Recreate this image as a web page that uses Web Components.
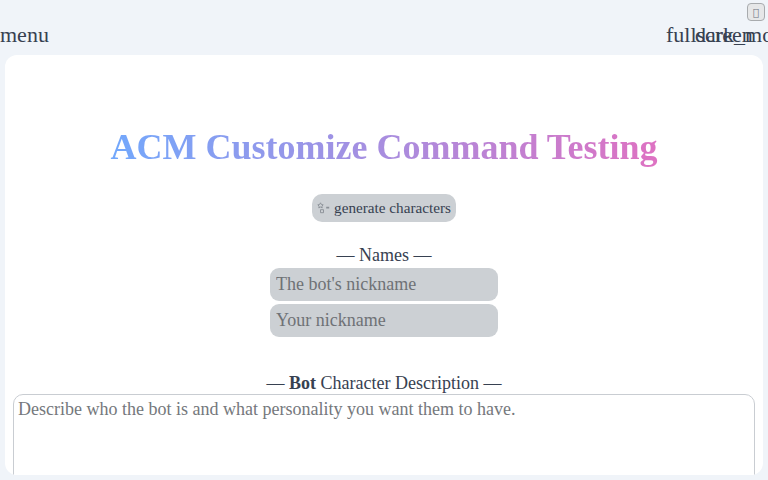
<!DOCTYPE html>
<html lang="en">
<head>
<meta charset="utf-8">
<title>ACM Customize Command Testing</title>
<style>
    html, body { margin: 0; height: 100%; overflow: hidden; }
    body { background: #f0f4f9; color: #374151; font-family: "Liberation Serif", serif; }
</style>
</head>
<body>
<acm-app>
    <icon-btn slot="left">menu</icon-btn>
    <icon-btn slot="right">fullscreen</icon-btn>
    <icon-btn slot="right">dark_mode</icon-btn>
    <acm-card>
        <acm-title>ACM Customize Command Testing</acm-title>
        <gen-button>generate characters</gen-button>
        <sec-label>— Names —</sec-label>
        <name-field placeholder="The bot's nickname"></name-field>
        <name-field placeholder="Your nickname"></name-field>
        <sec-label class="desc">— <b>Bot</b> Character Description —</sec-label>
        <desc-box placeholder="Describe who the bot is and what personality you want them to have."></desc-box>
    </acm-card>
</acm-app>

<script>
    // small helper, every element does the same thing in its constructor
    class Base extends HTMLElement {
        constructor(html) {
            super();
            this.attachShadow({mode: 'open'}).innerHTML = html;
        }
    }

    class AcmApp extends Base {
        constructor() {
            super(`
      <style>
        :host { display: flex; flex-direction: column; height: 480px; overflow: hidden; position: relative; }
        header { display: flex; justify-content: space-between; flex: 0 0 55px; box-sizing: border-box; padding: 22px 0 0 0; }
        .right { display: flex; padding-right: 44px; }
        button {
          position: absolute; top: 3px; right: 3px; width: 18px; height: 18px; padding: 0;
          background: #e6e7e8; border: 1px solid #a8abae; border-radius: 4px;
          color: #6b7280; font: 10px "DejaVu Sans", sans-serif;
        }
      </style>
      <header>
        <div><slot name="left"></slot></div>
        <div class="right"><slot name="right"></slot></div>
      </header>
      <button>&#xE000;</button>
      <slot></slot>`);
        }
    }

    class IconBtn extends Base {
        constructor() {
            super(`
      <style>
        :host { display: block; width: 29px; font-size: 22px; line-height: 26px; white-space: nowrap; }
      </style>
      <slot></slot>`);
        }
    }

    class AcmCard extends Base {
        constructor() {
            super(`
      <style>
        :host {
          display: flex; flex-direction: column; align-items: center;
          height: 420px; margin: 0 5px; box-sizing: border-box; padding: 71px 8px 0;
          background: #fff; border-radius: 12px; overflow: hidden;
        }
      </style>
      <slot></slot>`);
        }
    }

    class AcmTitle extends Base {
        constructor() {
            super(`
      <style>
        :host { display: block; font-size: 36px; font-weight: bold; line-height: 42px; }
        span {
          background: linear-gradient(90deg, #72a8fc, #de72c2);
          -webkit-background-clip: text; background-clip: text; color: transparent;
        }
      </style>
      <span><slot></slot></span>`);
        }
    }

    class GenButton extends Base {
        constructor() {
            super(`
      <style>
        :host {
          display: flex; align-items: center; gap: 4px; height: 28px; margin-top: 26px; padding: 0 5px;
          background: #ccd0d4; border-radius: 10px; font-size: 15.200px; color: #374151;
        }
        svg { width: 13px; height: 13px; flex: none; }
      </style>
      <svg viewBox="0 0 13 13" fill="none" stroke="#8a8f96" stroke-width=".9">
        <path d="M3.500 .8l.9 1.700 1.800.3-1.300 1.300.3 1.800-1.700-.9-1.700.9.3-1.800L.8 2.800l1.800-.3z"/>
        <path d="M9.200 4.800h3v1.800h-3z" fill="#8a8f96" stroke="none"/>
        <path d="M3.500 7.700h3v3h-3z"/>
      </svg>
      <slot></slot>`);
        }
    }

    class SecLabel extends Base {
        constructor() {
            super(`
      <style>
        :host { display: block; font-size: 18px; line-height: 21px; text-align: center; margin: 23px 0 2px; }
        :host(.desc) { margin: 33px 0 0; }
        ::slotted(b) { font-weight: bold; }
      </style>
      <slot></slot>`);
        }
    }

    class NameField extends Base {
        constructor() {
            super(`
      <style>
        :host { display: block; width: 228px; height: 33px; margin-bottom: 3px; }
        input {
          display: block; width: 100%; height: 100%; box-sizing: border-box; padding: 0 6px;
          background: #ccd0d4; border: 0; border-radius: 9px; outline: 0;
          font: 18px "Liberation Serif", serif; color: #374151;
        }
        input::placeholder { color: #6f7276; opacity: 1; }
      </style>
      <input type="text">`);
            this.shadowRoot.querySelector('input').placeholder = this.getAttribute('placeholder');
        }
    }

    class DescBox extends Base {
        constructor() {
            super(`
      <style>
        :host { display: block; align-self: stretch; flex: none; height: 120px; margin-bottom: -40px; }
        textarea {
          display: block; width: 100%; height: 100%; box-sizing: border-box; padding: 4px;
          background: #fff; border: 1px solid #c9cdd2; border-radius: 10px; outline: 0; resize: none;
          font: 18px "Liberation Serif", serif; color: #374151;
        }
        textarea::placeholder { color: #75787c; opacity: 1; }
      </style>
      <textarea></textarea>`);
            this.shadowRoot.querySelector('textarea').placeholder = this.getAttribute('placeholder');
        }
    }

    customElements.define('acm-app', AcmApp);
    customElements.define('icon-btn', IconBtn);
    customElements.define('acm-card', AcmCard);
    customElements.define('acm-title', AcmTitle);
    customElements.define('gen-button', GenButton);
    customElements.define('sec-label', SecLabel);
    customElements.define('name-field', NameField);
    customElements.define('desc-box', DescBox);
</script>
</body>
</html>
